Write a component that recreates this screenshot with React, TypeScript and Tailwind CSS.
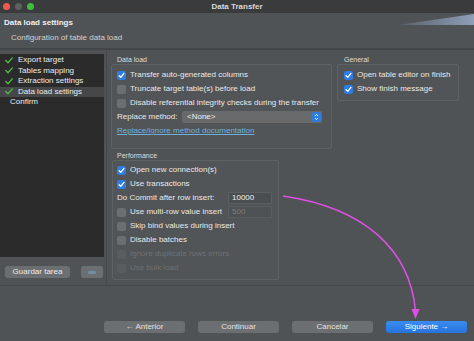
import React from "react";

const font = { fontFamily: '"Liberation Sans", Arial, sans-serif' };

function Check({ checked = false, disabled = false }: { checked?: boolean; disabled?: boolean }) {
  if (checked) {
    return (
      <span className="w-[9px] h-[9px] rounded-[2px] bg-[#2f7de1] flex items-center justify-center shrink-0">
        <svg width="7" height="7" viewBox="0 0 8 8">
          <path d="M1.3 4.2 L3.2 6.1 L6.8 1.6" stroke="white" strokeWidth="1.5" fill="none" strokeLinecap="round" strokeLinejoin="round" />
        </svg>
      </span>
    );
  }
  return (
    <span
      className={
        disabled
          ? "w-[9px] h-[9px] rounded-[2px] bg-[#5a5d60] shrink-0"
          : "w-[9px] h-[9px] rounded-[2px] bg-[#6c6f72] shrink-0"
      }
    />
  );
}

function Row({ checked, disabled, label }: { checked?: boolean; disabled?: boolean; label: string }) {
  return (
    <div className="h-[14px] flex items-center gap-[4px]">
      <Check checked={checked} disabled={disabled} />
      <span className={disabled ? "text-[#6d7073]" : "text-[#e8e8e8]"}>{label}</span>
    </div>
  );
}

function GreenCheck() {
  return (
    <svg width="8" height="7" viewBox="0 0 8 7" className="shrink-0">
      <path d="M0.8 3.6 L3 5.8 L7.3 0.9" stroke="#52b548" strokeWidth="1.4" fill="none" strokeLinecap="round" strokeLinejoin="round" />
    </svg>
  );
}

function Btn({ children, primary = false }: { children: React.ReactNode; primary?: boolean }) {
  return (
    <div
      className={
        primary
          ? "w-[81px] h-[12px] rounded-[3px] bg-gradient-to-b from-[#3a8cf0] to-[#2673dc] text-white flex items-center justify-center"
          : "w-[81px] h-[12px] rounded-[3px] bg-[#6c6f71] text-[#e2e2e2] flex items-center justify-center"
      }
    >
      {children}
    </div>
  );
}

export default function App() {
  return (
    <div className="w-[474px] h-[341px] bg-[#505356] overflow-hidden relative text-[8px] leading-none flex flex-col" style={font}>
      {/* Title bar */}
      <div className="h-[13px] bg-[#3a3b3c] flex items-center relative shrink-0">
        <div className="flex items-center gap-[5px] pl-[3px]">
          <span className="w-[7px] h-[7px] rounded-full bg-[#ee5a52]" />
          <span className="w-[7px] h-[7px] rounded-full bg-[#5d5f61]" />
          <span className="w-[7px] h-[7px] rounded-full bg-[#3fbd3f]" />
        </div>
        <div className="absolute inset-0 flex items-center justify-center text-[#d8d8d8] font-bold text-[8px]">Data Transfer</div>
      </div>

      {/* Header */}
      <div className="h-[35px] bg-[#505356] relative shrink-0 flex flex-col pl-[4px] pt-[6px] overflow-hidden">
        <div className="absolute right-0 top-[1px] w-[76px] h-[11px] bg-gradient-to-r from-[#5a6068] to-[#8e9fb8] [clip-path:polygon(0_100%,100%_0,100%_100%)]" />
        <span className="font-bold text-[#f0f0f0] text-[8px]">Data load settings</span>
        <span className="text-[#d0d0d0] text-[8px] pl-[7px] mt-[7px]">Configuration of table data load</span>
      </div>
      <div className="h-[2px] bg-[#434648] shrink-0" />

      {/* Body */}
      <div className="h-[235px] flex shrink-0">
        {/* Left */}
        <div className="w-[107px] border-r border-[#46494b] flex flex-col pt-[4px] shrink-0">
          <div className="w-[104px] h-[203px] bg-[#2b2b2c] flex flex-col pt-[1px] text-[#ececec]">
            <div className="h-[10.5px] flex items-center gap-[5px] pl-[5px]"><GreenCheck /><span>Export target</span></div>
            <div className="h-[10.5px] flex items-center gap-[5px] pl-[5px]"><GreenCheck /><span>Tables mapping</span></div>
            <div className="h-[10.5px] flex items-center gap-[5px] pl-[5px]"><GreenCheck /><span>Extraction settings</span></div>
            <div className="h-[10.5px] flex items-center gap-[5px] pl-[5px] bg-[#464748]"><GreenCheck /><span>Data load settings</span></div>
            <div className="h-[10.5px] flex items-center pl-[10px]"><span>Confirm</span></div>
          </div>
          <div className="flex items-center mt-[9px] pl-[5px] gap-[11px]">
            <div className="w-[65px] h-[12px] rounded-[3px] bg-[#6c6f71] text-[#ececec] flex items-center justify-center">Guardar tarea</div>
            <div className="w-[22px] h-[12px] rounded-[3px] bg-[#6c6f71] flex items-center justify-center">
              <span className="w-[8px] h-[3px] bg-[#6f8fa6] rounded-[1px]" />
            </div>
          </div>
        </div>

        {/* Right */}
        <div className="flex-1 flex flex-col pl-[4px] pt-[6px]">
          <div className="flex gap-[5px]">
            {/* Data load */}
            <div className="flex flex-col">
              <span className="text-[#dedede] text-[7px] pl-[6px] h-[8px]">Data load</span>
              <div className="w-[221px] h-[85px] border border-[#5f6265] bg-[#525558] rounded-[2px] flex flex-col pl-[5px] pt-[3px]">
                <Row checked label="Transfer auto-generated columns" />
                <Row label="Truncate target table(s) before load" />
                <Row label="Disable referential integrity checks during the transfer" />
                <div className="h-[14px] flex items-center">
                  <span className="text-[#e8e8e8] w-[65px]">Replace method:</span>
                  <div className="w-[140px] h-[12px] bg-[#67696b] rounded-[2px] flex items-center justify-between pl-[5px] pr-[1px]">
                    <span className="text-[#f0f0f0]">&lt;None&gt;</span>
                    <span className="w-[9px] h-[10px] rounded-[2px] bg-[#2f7de1] flex items-center justify-center">
                      <svg width="5" height="8" viewBox="0 0 5 8">
                        <path d="M1 3 L2.5 1.5 L4 3 M1 5 L2.5 6.5 L4 5" stroke="white" strokeWidth="1" fill="none" />
                      </svg>
                    </span>
                  </div>
                </div>
                <div className="h-[14px] flex items-center">
                  <span className="text-[#6fb0da] underline">Replace/ignore method documentation</span>
                </div>
              </div>
            </div>
            {/* General */}
            <div className="flex flex-col">
              <span className="text-[#dedede] text-[7px] pl-[7px] h-[8px]">General</span>
              <div className="w-[122px] h-[37px] border border-[#5f6265] bg-[#525558] rounded-[2px] flex flex-col pl-[6px] pt-[3px]">
                <Row checked label="Open table editor on finish" />
                <Row checked label="Show finish message" />
              </div>
            </div>
          </div>

          {/* Performance */}
          <div className="flex flex-col pl-[1px] mt-[3px]">
            <span className="text-[#dedede] text-[7px] pl-[5px] h-[8px]">Performance</span>
            <div className="w-[167px] h-[120px] border border-[#5f6265] bg-[#525558] rounded-[2px] flex flex-col pl-[4px] pt-[2px]">
              <Row checked label="Open new connection(s)" />
              <Row checked label="Use transactions" />
              <div className="h-[14px] flex items-center">
                <span className="text-[#e8e8e8] w-[111px]">Do Commit after row insert:</span>
                <div className="w-[44px] h-[12px] bg-[#4b4e50] border border-[#5c5f62] flex items-center pl-[3px] text-[#f2f2f2]">10000</div>
              </div>
              <div className="h-[14px] flex items-center">
                <div className="flex items-center gap-[4px] w-[111px]">
                  <Check />
                  <span className="text-[#e8e8e8]">Use multi-row value insert</span>
                </div>
                <div className="w-[44px] h-[12px] bg-[#4f5254] border border-[#5a5d60] flex items-center pl-[3px] text-[#7a7d80]">500</div>
              </div>
              <Row label="Skip bind values during insert" />
              <Row label="Disable batches" />
              <Row disabled label="Ignore duplicate rows errors" />
              <Row disabled label="Use bulk load" />
            </div>
          </div>
        </div>
      </div>
      <div className="h-[1px] bg-[#45484a] shrink-0" />

      {/* Footer */}
      <div className="flex-1 flex items-end justify-start pl-[104px] gap-[13px] pb-[8px]">
        <Btn>← Anterior</Btn>
        <Btn>Continuar</Btn>
        <Btn>Cancelar</Btn>
        <Btn primary>Siguiente →</Btn>
      </div>

      {/* Magenta annotation arrow */}
      <svg className="absolute inset-0 pointer-events-none" width="474" height="341" viewBox="0 0 474 341">
        <path d="M283 196 C 365 208, 410 250, 415.5 311" stroke="#df4fe6" strokeWidth="1.5" fill="none" />
        <polygon points="411.5,309 419.5,309 415.5,319" fill="#df4fe6" />
      </svg>
    </div>
  );
}
